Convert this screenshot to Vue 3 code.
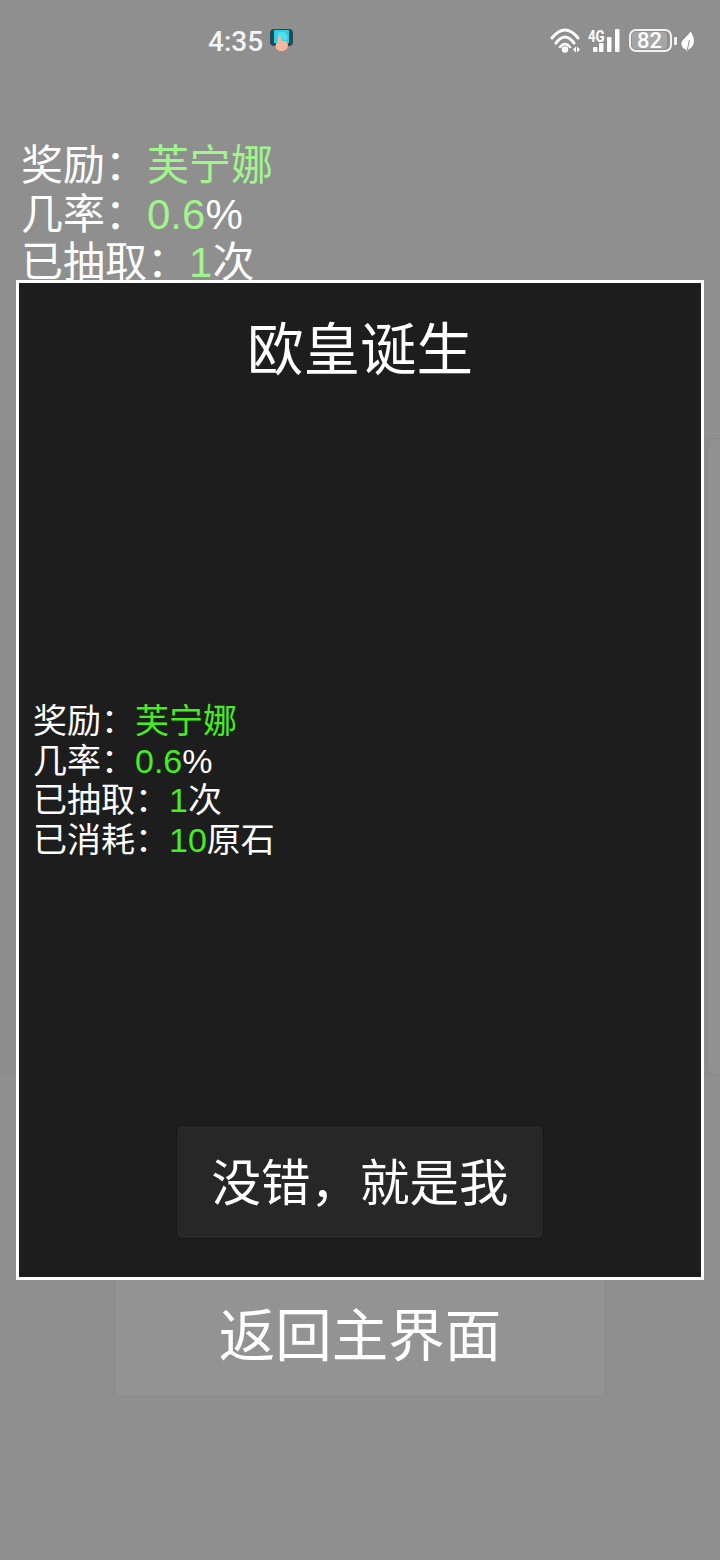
<template>
  <div class="page">
    <div class="status-bar">
      <div class="time-group">
        <span class="time">4:35</span>
        <svg class="app-icon" width="24" height="26" viewBox="0 0 24 26" aria-hidden="true">
          <rect x="0" y="1" width="23" height="17" rx="4" fill="#234a52" />
          <rect x="4" y="2" width="15" height="13" fill="#2ccfe4" />
          <path d="M8 4h6l3 3v5H8z" fill="#55dfee" />
          <path d="M7.500 9.500c0-1.700 3.300-1.700 3.300 0V12.500c3.500 0 7.200.6 7.200 4.500 0 3.700-2.700 6-6.500 6-3.500 0-6-2-6-5.300 0-1.500.8-2.800 2-3.500z" fill="#f5b7a0" />
        </svg>
      </div>
      <div class="status-right">
        <svg class="wifi" width="32" height="28" viewBox="0 0 32 28" aria-hidden="true">
          <path d="M3 11Q16 -5 29 11" fill="none" stroke="#fff" stroke-width="3" stroke-linecap="round" />
          <path d="M7 16Q16 4 25 16" fill="none" stroke="#fff" stroke-width="3" stroke-linecap="round" />
          <path d="M11 20Q16 14 21 20" fill="none" stroke="#fff" stroke-width="2.500" stroke-linecap="round" />
          <circle cx="16" cy="22.500" r="3.200" fill="#fff" />
          <path d="M24 22.500l3-3v6zM31 22.500l-3-3v6z" fill="#fff" />
        </svg>
        <div class="signal">
          <span class="net">4G</span>
          <svg width="33" height="24" viewBox="0 0 33 24" aria-hidden="true">
            <rect x="5" y="18" width="4.500" height="5" rx="1" fill="#fff" />
            <rect x="11" y="14" width="4.500" height="9" rx="1" fill="#fff" />
            <rect x="19" y="8" width="4.500" height="15" rx="1" fill="#fff" />
            <rect x="27" y="0" width="4.500" height="23" rx="1" fill="#fff" />
          </svg>
        </div>
        <div class="battery">
          <div class="battery-fill">82</div>
        </div>
        <span class="battery-tip"></span>
        <svg class="leaf" width="13" height="21" viewBox="0 0 13 21" aria-hidden="true">
          <path d="M9.500 0.500C12.500 4.500 13.300 8.500 12.700 12c-.6 3.500-3 5.500-5.200 6.200L6 20.500 4.600 18.200C1.800 17.300 .2 15 .5 12 .9 8 7 5.500 9.500 .5z" fill="#fff" />
          <path d="M6 20L8.500 9" fill="none" stroke="#8f8f8f" stroke-width="1" />
        </svg>
      </div>
    </div>

    <div class="stats">
      <div v-for="row in bgRows" :key="row.label">
        {{ row.label }}<span class="lucky-dim">{{ row.value }}</span>{{ row.unit }}
      </div>
    </div>

    <div class="mid-row">
      <div class="side-panel"></div>
    </div>

    <button class="back-btn">返回主界面</button>

    <div class="dialog">
      <div class="dialog-title">欧皇诞生</div>
      <div class="dialog-stats">
        <div v-for="row in dialogRows" :key="row.label">
          {{ row.label }}<span class="lucky">{{ row.value }}</span>{{ row.unit }}
        </div>
      </div>
      <button class="confirm-btn">没错，就是我</button>
    </div>
  </div>
</template>

<script setup>
const bgRows = [
  { label: '奖励：', value: '芙宁娜', unit: '' },
  { label: '几率：', value: '0.6', unit: '%' },
  { label: '已抽取：', value: '1', unit: '次' }
];

const dialogRows = [
  ...bgRows,
  { label: '已消耗：', value: '10', unit: '原石' }
];
</script>

<style>
html,
body {
  margin: 0;
  background: #8f8f8f;
}
</style>

<style scoped>
.page {
  position: relative;
  width: 720px;
  height: 1560px;
  overflow: hidden;
  background: #8f8f8f;
  color: #fff;
  font-family: "Liberation Sans", "Noto Sans CJK SC", sans-serif;
}

.status-bar {
  height: 84px;
  display: flex;
  justify-content: space-between;
  box-sizing: border-box;
  padding: 26px 26px 0 208px;
}

.time-group {
  display: flex;
  align-items: flex-start;
  gap: 7px;
}

.time {
  font-family: Roboto, "Liberation Sans", sans-serif;
  font-size: 28px;
  font-weight: 500;
  line-height: 30px;
  margin-top: 1px;
  color: #f4f4f4;
  width: 55px;
}

.app-icon {
  margin-top: 2px;
}

.status-right {
  display: flex;
  align-items: flex-start;
  height: 30px;
}

.wifi {
  margin-top: 1px;
  margin-right: 7px;
}

.signal {
  position: relative;
  width: 33px;
  height: 26px;
  margin-right: 8px;
}

.signal svg {
  position: absolute;
  left: 0;
  top: 3px;
}

.net {
  position: absolute;
  left: 0;
  top: 2px;
  font-family: Roboto, sans-serif;
  font-size: 17px;
  font-weight: 700;
  line-height: 17px;
  transform: scaleX(0.78);
  transform-origin: left top;
}

.battery {
  width: 43px;
  height: 23px;
  margin-top: 3px;
  box-sizing: border-box;
  border: 2px solid #f2f2f2;
  border-radius: 7px;
  padding: 1px;
}

.battery-fill {
  width: 35px;
  height: 100%;
  border-radius: 4px;
  background: #a6a6a6;
  display: flex;
  align-items: center;
  justify-content: center;
  font-family: Roboto, sans-serif;
  font-size: 22px;
  font-weight: 500;
}

.battery-tip {
  width: 3px;
  height: 8px;
  margin: 11px 4px 0 2px;
  background: #f2f2f2;
  border-radius: 1px;
}

.leaf {
  margin-top: 5px;
}

.stats {
  height: 354px;
  box-sizing: border-box;
  padding: 58px 0 0 21px;
  font-size: 42px;
  line-height: 48.500px;
}

.lucky-dim {
  color: #a0f58c;
}

.mid-row {
  height: 637px;
  display: flex;
  justify-content: flex-end;
  background: #8d8d8d;
}

.side-panel {
  width: 13px;
  box-sizing: border-box;
  border: 1px solid #888;
  border-right: 0;
  border-radius: 6px 0 0 6px;
  background: #919191;
}

.back-btn {
  position: absolute;
  left: 114px;
  top: 1076px;
  width: 492px;
  height: 321px;
  margin: 0;
  padding: 200px 0 0;
  box-sizing: border-box;
  border: 1px solid #8a8a8a;
  border-radius: 6px;
  background: #939393;
  color: #fff;
  font: inherit;
  font-size: 56.500px;
  line-height: 56px;
}

.dialog {
  position: absolute;
  left: 16px;
  top: 280px;
  width: 688px;
  height: 1000px;
  box-sizing: border-box;
  border: 3px solid #fff;
  background: #1d1d1d;
  display: flex;
  flex-direction: column;
}

.dialog-title {
  margin-top: 36px;
  font-size: 56.500px;
  line-height: 64px;
  text-align: center;
}

.dialog-stats {
  margin-top: 319px;
  padding-left: 14px;
  font-size: 34px;
  line-height: 39.500px;
}

.lucky {
  color: #44ee1f;
}

.confirm-btn {
  display: block;
  width: 368px;
  height: 114px;
  margin: auto auto 38px;
  padding: 0 0 6px;
  box-sizing: border-box;
  border: 1px solid #161616;
  border-radius: 6px;
  background: #272727;
  color: #fff;
  font: inherit;
  font-size: 49.500px;
}
</style>
